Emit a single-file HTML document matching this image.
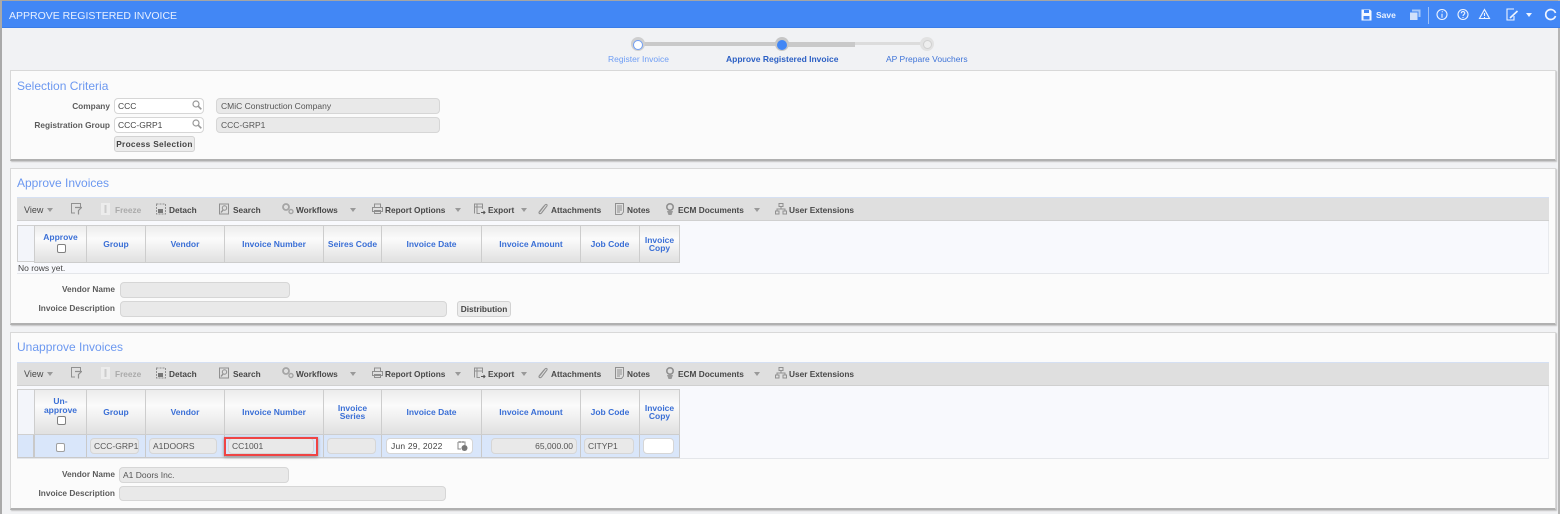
<!DOCTYPE html>
<html><head><meta charset="utf-8"><title>Approve Registered Invoice</title>
<style>
html,body{margin:0;padding:0}
body{width:1560px;height:514px;overflow:hidden;position:relative;background:#f1f2f4;font-family:"Liberation Sans",sans-serif;color:#444;filter:blur(.3px)}
div,span,svg{position:absolute;box-sizing:border-box}
.t{white-space:nowrap;line-height:12px}
.panel{left:10px;width:1546px;background:#fbfbfb;border:1px solid #d8d8d8;border-bottom:2px solid #b0b0b0;box-shadow:1px 1px 1px #c4c4c4}
.h{left:17px;font-size:12px;color:#6c98f0;white-space:nowrap;line-height:14px}
.lb{font-size:8.3px;font-weight:bold;color:#5c5c5c;text-align:right;white-space:nowrap;line-height:12px}
.ro{background:#e9e9e9;border:1px solid #d6d6d6;border-radius:4px;font-size:8.5px;color:#555;line-height:15px;padding-left:3px;white-space:nowrap}
.in{background:#fff;border:1px solid #d6d6d6;border-radius:4px;font-size:8.5px;color:#444;line-height:15px;padding-left:3px;white-space:nowrap}
.btn{background:#ececec;border:1px solid #d2d2d2;border-radius:3px;font-size:8.3px;font-weight:bold;color:#444;text-align:center;line-height:14px;white-space:nowrap}
.tb{left:17px;width:1532px;height:24px;background:#dfdfdf;border-top:1px solid #d5e0f3;border-bottom:1px solid #d0d0d0}
.tb .t{font-size:8.3px;font-weight:bold;color:#484848;top:6px}
.tb .a{width:0;height:0;top:10px;border-left:3px solid transparent;border-right:3px solid transparent;border-top:4px solid #999}
.tb svg{top:5px;fill:none;stroke:#909090;stroke-width:1}
.tb2 .t{top:5px}
.tb2 .a{top:9px}
.tb2 svg{top:4px}
.th{background:linear-gradient(#ececec,#fbfbfb 35%,#e0e0e0);border:1px solid #cdcdcd;border-left:0;font-size:8.5px;font-weight:bold;color:#3a6fd6;text-align:center;line-height:8.5px;display:flex;align-items:center;justify-content:center}
.td{background:#d9e6fa;border-right:1px solid #c9c9c9;border-bottom:1px solid #c9c9c9}
.cb{width:9px;height:9px;background:#fff;border:1px solid #808080;border-radius:2px}
.lab{font-size:8.5px;white-space:nowrap;line-height:12px;text-align:center}
</style></head><body>
<div style="left:0;top:0;width:1560px;height:1px;background:#a5a5a5"></div>
<div style="left:0;top:0;width:2px;height:514px;background:#a9a9a9"></div>
<div style="left:1558px;top:0;width:2px;height:514px;background:#b5b5b5"></div>
<div style="left:2px;top:1px;width:1558px;height:27px;background:#4287f5;border-bottom:1px solid #3a7de8"></div>
<div class="t" style="left:9px;top:10px;font-size:10.5px;color:#e8f0ff">APPROVE REGISTERED INVOICE</div>

<svg style="left:1361px;top:9px" width="11" height="12" viewBox="0 0 11 12"><path d="M0.5 0.5H9L10.5 2V11.5H0.5Z" fill="#f4f8ff"/><rect x="3" y="1" width="5" height="3" fill="#4287f5"/><rect x="2.5" y="7" width="6" height="3.5" fill="#4287f5"/></svg>
<div class="t" style="left:1376px;top:9px;font-size:8.5px;font-weight:bold;color:#eaf2ff">Save</div>
<svg style="left:1409px;top:9px" width="12" height="12" viewBox="0 0 12 12"><rect x="3" y="0.5" width="8.5" height="7.5" fill="#a8c8f8"/><rect x="0.5" y="3" width="8.5" height="8.5" fill="#d0e0fa" stroke="#4287f5" stroke-width="1"/></svg>
<div style="left:1428px;top:7px;width:1px;height:17px;background:#9dc0f8"></div>
<svg style="left:1436px;top:8px" width="12" height="13" viewBox="0 0 12 13" fill="none" stroke="#eef4ff" stroke-width="1.1"><circle cx="6" cy="6.5" r="5"/><path d="M6.3 3.2V4.2M6 5.8V9.8"/></svg>
<svg style="left:1457px;top:8px" width="12" height="13" viewBox="0 0 12 13" fill="none" stroke="#eef4ff" stroke-width="1.1"><circle cx="6" cy="6.5" r="5"/><path d="M4.3 5.2C4.3 3 7.8 3 7.8 5.1C7.8 6.4 6 6.5 6 8M6 9V10"/></svg>
<svg style="left:1478px;top:8px" width="13" height="12" viewBox="0 0 13 12" fill="none" stroke="#eef4ff" stroke-width="1.1"><path d="M6.5 1.5L11.5 10.5H1.5ZM6.5 5V8M6.5 9V10"/></svg>
<svg style="left:1506px;top:8px" width="13" height="13" viewBox="0 0 13 13" fill="none" stroke="#eef4ff" stroke-width="1.1"><path d="M8 1H1V12H8V8"/><path d="M4 10L11.5 3" stroke-width="1.6"/></svg>
<div style="left:1526px;top:13px;width:0;height:0;border-left:3px solid transparent;border-right:3px solid transparent;border-top:4px solid #eef4ff"></div>
<svg style="left:1544px;top:8px" width="13" height="13" viewBox="0 0 13 13" fill="none" stroke="#eef4ff" stroke-width="1.7"><path d="M11.5 5A5 5 0 1 0 11.5 8"/></svg>

<!-- steps -->
<div style="left:640px;top:42px;width:145px;height:4px;background:#c9c9c9"></div>
<div style="left:785px;top:42px;width:70px;height:5px;background:#c9c9c9"></div>
<div style="left:855px;top:42px;width:72px;height:3px;background:#dcdcdc"></div>
<div style="left:631px;top:37px;width:14px;height:14px;border-radius:50%;background:#cfcfcf"></div>
<div style="left:633px;top:40px;width:10px;height:10px;border-radius:50%;background:#fff;border:1px solid #6f9ef5"></div>
<div style="left:775px;top:37px;width:14px;height:14px;border-radius:50%;background:#c6c6c6"></div>
<div style="left:777px;top:40px;width:10px;height:10px;border-radius:50%;background:#4287f5"></div>
<div style="left:920px;top:37px;width:14px;height:14px;border-radius:50%;background:#e2e2e2"></div>
<div style="left:923px;top:40px;width:9px;height:9px;border-radius:50%;background:#eee;border:1px solid #d0d0d0"></div>
<div class="lab" style="left:608px;top:53px;color:#6f9ef5">Register Invoice</div>
<div class="lab" style="left:726px;top:53px;color:#2b5fc4;font-weight:bold">Approve Registered Invoice</div>
<div class="lab" style="left:886px;top:53px;color:#3f74d8">AP Prepare Vouchers</div>

<!-- Selection -->
<div class="panel" style="top:70px;height:91px"></div>
<div class="h" style="top:79px">Selection Criteria</div>
<div class="lb" style="left:10px;width:100px;top:100px">Company</div>
<div class="in" style="left:114px;top:98px;width:90px;height:16px">CCC</div>
<svg style="left:192px;top:100px" width="10" height="10" viewBox="0 0 10 10" fill="none" stroke="#999" stroke-width="1.2"><circle cx="4" cy="4" r="3"/><path d="M6.3 6.3L9.3 9.3" stroke-width="1.6"/></svg>
<div class="ro" style="left:216px;top:98px;width:224px;height:16px;padding-left:4px">CMiC Construction Company</div>
<div class="lb" style="left:10px;width:100px;top:119px">Registration Group</div>
<div class="in" style="left:114px;top:117px;width:90px;height:16px">CCC-GRP1</div>
<svg style="left:192px;top:119px" width="10" height="10" viewBox="0 0 10 10" fill="none" stroke="#999" stroke-width="1.2"><circle cx="4" cy="4" r="3"/><path d="M6.3 6.3L9.3 9.3" stroke-width="1.6"/></svg>
<div class="ro" style="left:216px;top:117px;width:224px;height:16px;padding-left:4px">CCC-GRP1</div>
<div class="btn" style="left:114px;top:136px;width:81px;height:16px;letter-spacing:.3px">Process Selection</div>

<!-- Approve -->
<div class="panel" style="top:168px;height:157px"></div>
<div class="h" style="top:176px">Approve Invoices</div>
<div style="left:17px;top:221px;width:1532px;height:53px;background:#f8f9fd;border-bottom:1px solid #e4e6ea;border-right:1px solid #e8eaee"></div>
<div class="tb" style="top:197px">
<div class="t" style="left:7px;font-weight:normal;font-size:9px">View</div><div class="a" style="left:30px"></div>
<svg style="left:54px" width="11" height="12" viewBox="0 0 11 12"><path d="M9.5 5V0.5H0.5V10H4"/><path d="M4 4.5H10.5L7.5 7.5V11.5" stroke-width="1.2"/></svg>
<svg style="left:84px" width="9" height="12" viewBox="0 0 9 12"><rect x="0" y="0" width="9" height="12" fill="#ececec" stroke="none"/><path d="M4.5 2V10" stroke="#ccc" stroke-width="2"/></svg>
<div class="t" style="left:98px;color:#aaa">Freeze</div>
<svg style="left:139px" width="10" height="12" viewBox="0 0 10 12"><rect x="0.5" y="1" width="9" height="10" stroke-dasharray="2 1"/><rect x="2" y="6" width="5" height="4" fill="#777" stroke="none"/></svg>
<div class="t" style="left:152px">Detach</div>
<svg style="left:202px" width="10" height="12" viewBox="0 0 10 12"><rect x="0.5" y="1" width="9" height="10"/><circle cx="5.5" cy="5" r="2.2"/><path d="M4 7L2 9.5" stroke-width="1.4"/></svg>
<div class="t" style="left:216px">Search</div>
<svg style="left:265px" width="12" height="12" viewBox="0 0 12 12"><circle cx="4" cy="4" r="3" stroke-width="1.8" stroke="#a5a5a5"/><circle cx="9" cy="8.5" r="2" stroke-width="1.4" stroke="#a5a5a5"/></svg>
<div class="t" style="left:279px">Workflows</div><div class="a" style="left:333px"></div>
<svg style="left:355px" width="11" height="12" viewBox="0 0 11 12"><path d="M2.5 4V1H8.5V4M0.5 4.5H10.5V8.5H0.5ZM2.5 7.5H8.5V10.5H2.5Z"/></svg>
<div class="t" style="left:368px">Report Options</div><div class="a" style="left:438px"></div>
<svg style="left:457px" width="12" height="12" viewBox="0 0 12 12"><path d="M0.5 10.5V1H8.5V6M0.5 4H8M3 1V10.5H6"/><path d="M7 9.5H11M9.5 8L11 9.5L9.5 11" stroke="#555"/></svg>
<div class="t" style="left:471px">Export</div><div class="a" style="left:504px"></div>
<svg style="left:521px" width="10" height="12" viewBox="0 0 10 12"><path d="M1.5 9L7 2C8.5 0.5 10 2 8.5 3.5L3.5 10C2 11.5 0 10 1.5 8.5L6 3" stroke-width="1.1"/></svg>
<div class="t" style="left:534px">Attachments</div>
<svg style="left:598px" width="9" height="12" viewBox="0 0 9 12"><path d="M0.5 0.5H8.5V9L6.5 11.5H0.5ZM2 3H7M2 5H7M2 7H7M2 9H5"/></svg>
<div class="t" style="left:610px">Notes</div>
<svg style="left:648px" width="10" height="13" viewBox="0 0 10 13"><circle cx="5" cy="4" r="3.2" stroke-width="1.6"/><path d="M2 8H8L6.5 12H3.5Z" fill="#999" stroke="none"/></svg>
<div class="t" style="left:661px">ECM Documents</div><div class="a" style="left:737px"></div>
<svg style="left:758px" width="12" height="12" viewBox="0 0 12 12"><rect x="4" y="0.5" width="4" height="3"/><rect x="0.5" y="8" width="3.5" height="3"/><rect x="8" y="8" width="3.5" height="3"/><path d="M6 3.5V6M2 8V6H10V8"/></svg>
<div class="t" style="left:772px">User Extensions</div>
</div>
<div style="left:17px;top:225px;width:17px;height:37px;background:#f3f5fa;border:1px solid #d0d0d0;border-right:0"></div>
<div class="th" style="left:34px;top:225px;width:53px;height:38px;border-left:1px solid #cdcdcd;align-items:flex-start;padding-top:7px">Approve</div>
<div class="cb" style="left:57px;top:244px"></div>
<div class="th" style="left:87px;top:225px;width:59px;height:38px">Group</div>
<div class="th" style="left:146px;top:225px;width:79px;height:38px">Vendor</div>
<div class="th" style="left:225px;top:225px;width:99px;height:38px">Invoice Number</div>
<div class="th" style="left:324px;top:225px;width:58px;height:38px">Seires Code</div>
<div class="th" style="left:382px;top:225px;width:100px;height:38px">Invoice Date</div>
<div class="th" style="left:482px;top:225px;width:99px;height:38px">Invoice Amount</div>
<div class="th" style="left:581px;top:225px;width:59px;height:38px">Job Code</div>
<div class="th" style="left:640px;top:225px;width:40px;height:38px">Invoice<br>Copy</div>
<div class="t" style="left:18px;top:262px;font-size:8.5px;color:#444">No rows yet.</div>
<div class="lb" style="left:20px;width:95px;top:283px">Vendor Name</div>
<div class="ro" style="left:120px;top:282px;width:170px;height:16px"></div>
<div class="lb" style="left:20px;width:95px;top:302px">Invoice Description</div>
<div class="ro" style="left:120px;top:301px;width:327px;height:16px"></div>
<div class="btn" style="left:457px;top:301px;width:54px;height:16px">Distribution</div>

<!-- Unapprove -->
<div class="panel" style="top:332px;height:178px"></div>
<div class="h" style="top:340px">Unapprove Invoices</div>
<div style="left:17px;top:386px;width:1532px;height:73px;background:#f8f9fd;border-bottom:1px solid #e4e6ea;border-right:1px solid #e8eaee"></div>
<div class="tb tb2" style="top:362px">
<div class="t" style="left:7px;font-weight:normal;font-size:9px">View</div><div class="a" style="left:30px"></div>
<svg style="left:54px" width="11" height="12" viewBox="0 0 11 12"><path d="M9.5 5V0.5H0.5V10H4"/><path d="M4 4.5H10.5L7.5 7.5V11.5" stroke-width="1.2"/></svg>
<svg style="left:84px" width="9" height="12" viewBox="0 0 9 12"><rect x="0" y="0" width="9" height="12" fill="#ececec" stroke="none"/><path d="M4.5 2V10" stroke="#ccc" stroke-width="2"/></svg>
<div class="t" style="left:98px;color:#aaa">Freeze</div>
<svg style="left:139px" width="10" height="12" viewBox="0 0 10 12"><rect x="0.5" y="1" width="9" height="10" stroke-dasharray="2 1"/><rect x="2" y="6" width="5" height="4" fill="#777" stroke="none"/></svg>
<div class="t" style="left:152px">Detach</div>
<svg style="left:202px" width="10" height="12" viewBox="0 0 10 12"><rect x="0.5" y="1" width="9" height="10"/><circle cx="5.5" cy="5" r="2.2"/><path d="M4 7L2 9.5" stroke-width="1.4"/></svg>
<div class="t" style="left:216px">Search</div>
<svg style="left:265px" width="12" height="12" viewBox="0 0 12 12"><circle cx="4" cy="4" r="3" stroke-width="1.8" stroke="#a5a5a5"/><circle cx="9" cy="8.5" r="2" stroke-width="1.4" stroke="#a5a5a5"/></svg>
<div class="t" style="left:279px">Workflows</div><div class="a" style="left:333px"></div>
<svg style="left:355px" width="11" height="12" viewBox="0 0 11 12"><path d="M2.5 4V1H8.5V4M0.5 4.5H10.5V8.5H0.5ZM2.5 7.5H8.5V10.5H2.5Z"/></svg>
<div class="t" style="left:368px">Report Options</div><div class="a" style="left:438px"></div>
<svg style="left:457px" width="12" height="12" viewBox="0 0 12 12"><path d="M0.5 10.5V1H8.5V6M0.5 4H8M3 1V10.5H6"/><path d="M7 9.5H11M9.5 8L11 9.5L9.5 11" stroke="#555"/></svg>
<div class="t" style="left:471px">Export</div><div class="a" style="left:504px"></div>
<svg style="left:521px" width="10" height="12" viewBox="0 0 10 12"><path d="M1.5 9L7 2C8.5 0.5 10 2 8.5 3.5L3.5 10C2 11.5 0 10 1.5 8.5L6 3" stroke-width="1.1"/></svg>
<div class="t" style="left:534px">Attachments</div>
<svg style="left:598px" width="9" height="12" viewBox="0 0 9 12"><path d="M0.5 0.5H8.5V9L6.5 11.5H0.5ZM2 3H7M2 5H7M2 7H7M2 9H5"/></svg>
<div class="t" style="left:610px">Notes</div>
<svg style="left:648px" width="10" height="13" viewBox="0 0 10 13"><circle cx="5" cy="4" r="3.2" stroke-width="1.6"/><path d="M2 8H8L6.5 12H3.5Z" fill="#999" stroke="none"/></svg>
<div class="t" style="left:661px">ECM Documents</div><div class="a" style="left:737px"></div>
<svg style="left:758px" width="12" height="12" viewBox="0 0 12 12"><rect x="4" y="0.5" width="4" height="3"/><rect x="0.5" y="8" width="3.5" height="3"/><rect x="8" y="8" width="3.5" height="3"/><path d="M6 3.5V6M2 8V6H10V8"/></svg>
<div class="t" style="left:772px">User Extensions</div>
</div>
<div style="left:17px;top:389px;width:17px;height:46px;background:#f3f5fa;border:1px solid #d0d0d0;border-right:0"></div>
<div class="th" style="left:34px;top:389px;width:53px;height:46px;border-left:1px solid #cdcdcd;align-items:flex-start;padding-top:7px">Un-<br>approve</div>
<div class="cb" style="left:57px;top:416px"></div>
<div class="th" style="left:87px;top:389px;width:59px;height:46px">Group</div>
<div class="th" style="left:146px;top:389px;width:79px;height:46px">Vendor</div>
<div class="th" style="left:225px;top:389px;width:99px;height:46px">Invoice Number</div>
<div class="th" style="left:324px;top:389px;width:58px;height:46px">Invoice<br>Series</div>
<div class="th" style="left:382px;top:389px;width:100px;height:46px">Invoice Date</div>
<div class="th" style="left:482px;top:389px;width:99px;height:46px">Invoice Amount</div>
<div class="th" style="left:581px;top:389px;width:59px;height:46px">Job Code</div>
<div class="th" style="left:640px;top:389px;width:40px;height:46px">Invoice<br>Copy</div>

<div class="td" style="left:17px;top:435px;width:17px;height:23px;border-left:1px solid #d0d0d0"></div>
<div class="td" style="left:34px;top:435px;width:53px;height:23px;border-left:1px solid #c9c9c9"></div>
<div class="td" style="left:87px;top:435px;width:59px;height:23px"></div>
<div class="td" style="left:146px;top:435px;width:79px;height:23px"></div>
<div class="td" style="left:225px;top:435px;width:99px;height:23px"></div>
<div class="td" style="left:324px;top:435px;width:58px;height:23px"></div>
<div class="td" style="left:382px;top:435px;width:100px;height:23px"></div>
<div class="td" style="left:482px;top:435px;width:99px;height:23px"></div>
<div class="td" style="left:581px;top:435px;width:59px;height:23px"></div>
<div class="td" style="left:640px;top:435px;width:40px;height:23px"></div>
<div class="cb" style="left:56px;top:443px;border-color:#a0a0a0"></div>
<div class="ro" style="left:90px;top:438px;width:49px;height:16px">CCC-GRP1</div>
<div class="ro" style="left:149px;top:438px;width:68px;height:16px">A1DOORS</div>
<div class="ro" style="left:228px;top:438px;width:86px;height:16px">CC1001</div>
<div style="left:224px;top:437px;width:94px;height:19px;border:2px solid #ef4444;box-shadow:0 1px 3px #888"></div>
<div class="ro" style="left:327px;top:438px;width:49px;height:16px"></div>
<div class="in" style="left:386px;top:438px;width:87px;height:16px;padding-left:4px;letter-spacing:.2px">Jun 29, 2022</div>
<svg style="left:457px;top:440px" width="11" height="12" viewBox="0 0 11 12"><path d="M1 2H8V5M1 2V9H4M3 1V3M6 1V3" fill="none" stroke="#888"/><circle cx="7.5" cy="8" r="3" fill="#777"/></svg>
<div class="ro" style="left:491px;top:438px;width:86px;height:16px;text-align:right;padding:0 3px 0 0">65,000.00</div>
<div class="ro" style="left:584px;top:438px;width:50px;height:16px">CITYP1</div>
<div class="in" style="left:643px;top:438px;width:31px;height:16px"></div>

<div class="lb" style="left:20px;width:95px;top:468px">Vendor Name</div>
<div class="ro" style="left:119px;top:467px;width:170px;height:16px">A1 Doors Inc.</div>
<div class="lb" style="left:20px;width:95px;top:487px">Invoice Description</div>
<div class="ro" style="left:119px;top:486px;width:327px;height:15px"></div>
</body></html>
